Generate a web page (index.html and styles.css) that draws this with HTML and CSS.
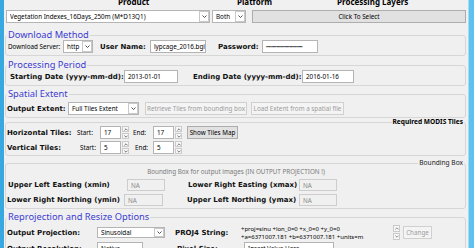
FILE: index.html
```html
<!DOCTYPE html>
<html>
<head>
<meta charset="utf-8">
<title>MODIS Download</title>
<link rel="stylesheet" href="styles.css">
</head>
<body>
<div class="window">
  <div class="edge-left"></div>
  <div class="form">
    <div class="colheads">
      <span class="h-product">Product</span>
      <span class="h-platform">Platform</span>
      <span class="h-layers">Processing Layers</span>
    </div>
    <div class="toprow">
      <div class="select w-product"><span class="val">Vegetation Indexes_16Days_250m (M*D13Q1)</span><span class="arrow"><svg width="5" height="3" viewBox="0 0 5 3"><path d="M0.5 0.5L2.5 2.5L4.5 0.5" fill="none" stroke="#404040" stroke-width="0.9"/></svg></span></div>
      <div class="select w-platform"><span class="val">Both</span><span class="arrow"><svg width="5" height="3" viewBox="0 0 5 3"><path d="M0.5 0.5L2.5 2.5L4.5 0.5" fill="none" stroke="#404040" stroke-width="0.9"/></svg></span></div>
      <div class="btn w-layers">Click To Select</div>
    </div>

    <fieldset class="group g-download">
      <legend class="title">Download Method</legend>
      <div class="row">
        <span class="lbl c-server">Download Server:</span>
        <div class="select w-http"><span class="val">http</span><span class="arrow"><svg width="5" height="3" viewBox="0 0 5 3"><path d="M0.5 0.5L2.5 2.5L4.5 0.5" fill="none" stroke="#404040" stroke-width="0.9"/></svg></span></div>
        <span class="blbl c-user">User Name:</span>
        <div class="input w-cred">lypcage_2016.bgi</div>
        <span class="blbl c-pass">Password:</span>
        <div class="input w-cred pw">••••••••••••••••••••••••••••</div>
      </div>
    </fieldset>

    <fieldset class="group g-period">
      <legend class="title">Processing Period</legend>
      <div class="row">
        <span class="blbl c-start">Starting Date (yyyy-mm-dd):</span>
        <div class="input w-date1">2013-01-01</div>
        <span class="blbl c-end">Ending Date (yyyy-mm-dd):</span>
        <div class="input w-date2">2016-01-16</div>
      </div>
    </fieldset>

    <fieldset class="group g-spatial">
      <legend class="title">Spatial Extent</legend>
      <div class="row">
        <span class="blbl c-extent">Output Extent:</span>
        <div class="select w-extent"><span class="val">Full Tiles Extent</span><span class="arrow"><svg width="5" height="3" viewBox="0 0 5 3"><path d="M0.5 0.5L2.5 2.5L4.5 0.5" fill="none" stroke="#404040" stroke-width="0.9"/></svg></span></div>
        <div class="btn disabled w-retrieve">Retrieve Tiles from bounding box</div>
        <div class="btn disabled w-load">Load Extent from a spatial file</div>
      </div>
    </fieldset>

    <fieldset class="group sub g-tiles">
      <legend class="subtitle strong">Required MODIS Tiles</legend>
      <div class="row">
        <span class="blbl c-htiles">Horizontal Tiles:</span>
        <span class="lbl c-hstart">Start:</span>
        <div class="input w-tile">17</div>
        <div class="spin"><b><svg width="4" height="3" viewBox="0 0 4 3"><path d="M0.4 2.4L2 0.8L3.6 2.4" fill="none" stroke="#555" stroke-width="0.8"/></svg></b><b><svg width="4" height="3" viewBox="0 0 4 3"><path d="M0.4 0.6L2 2.2L3.6 0.6" fill="none" stroke="#555" stroke-width="0.8"/></svg></b></div>
        <span class="lbl c-hend">End:</span>
        <div class="input w-tile">17</div>
        <div class="spin"><b><svg width="4" height="3" viewBox="0 0 4 3"><path d="M0.4 2.4L2 0.8L3.6 2.4" fill="none" stroke="#555" stroke-width="0.8"/></svg></b><b><svg width="4" height="3" viewBox="0 0 4 3"><path d="M0.4 0.6L2 2.2L3.6 0.6" fill="none" stroke="#555" stroke-width="0.8"/></svg></b></div>
        <div class="btn w-map">Show Tiles Map</div>
      </div>
      <div class="row r-vtiles">
        <span class="blbl c-vtiles">Vertical Tiles:</span>
        <span class="lbl c-vstart">Start:</span>
        <div class="input w-tile">5</div>
        <div class="spin"><b><svg width="4" height="3" viewBox="0 0 4 3"><path d="M0.4 2.4L2 0.8L3.6 2.4" fill="none" stroke="#555" stroke-width="0.8"/></svg></b><b><svg width="4" height="3" viewBox="0 0 4 3"><path d="M0.4 0.6L2 2.2L3.6 0.6" fill="none" stroke="#555" stroke-width="0.8"/></svg></b></div>
        <span class="lbl c-vend">End:</span>
        <div class="input w-tile">5</div>
        <div class="spin"><b><svg width="4" height="3" viewBox="0 0 4 3"><path d="M0.4 2.4L2 0.8L3.6 2.4" fill="none" stroke="#555" stroke-width="0.8"/></svg></b><b><svg width="4" height="3" viewBox="0 0 4 3"><path d="M0.4 0.6L2 2.2L3.6 0.6" fill="none" stroke="#555" stroke-width="0.8"/></svg></b></div>
      </div>
    </fieldset>

    <fieldset class="group sub g-bbox">
      <legend class="subtitle">Bounding Box</legend>
      <div class="caption">Bounding Box for output images (IN OUTPUT PROJECTION !)</div>
      <div class="row r-bb1">
        <span class="blbl c-ulx">Upper Left Easting (xmin)</span>
        <div class="input disabled w-na">NA</div>
        <span class="blbl c-lrx">Lower Right Easting (xmax)</span>
        <div class="input disabled w-na">NA</div>
      </div>
      <div class="row r-bb2">
        <span class="blbl c-lry">Lower Right Northing (ymin)</span>
        <div class="input disabled w-na2">NA</div>
        <span class="blbl c-uly">Upper Left Northing (ymax)</span>
        <div class="input disabled w-na">NA</div>
      </div>
    </fieldset>

    <fieldset class="group g-repro">
      <legend class="title">Reprojection and Resize Options</legend>
      <div class="row r-proj">
        <span class="blbl c-proj">Output Projection:</span>
        <div class="select w-proj"><span class="val">Sinusoidal</span><span class="arrow"><svg width="5" height="3" viewBox="0 0 5 3"><path d="M0.5 0.5L2.5 2.5L4.5 0.5" fill="none" stroke="#404040" stroke-width="0.9"/></svg></span></div>
        <span class="blbl c-proj4">PROJ4 String:</span>
        <div class="projtext">+proj=sinu +lon_0=0 +x_0=0 +y_0=0<br>+a=6371007.181 +b=6371007.181 +units=m</div>
        <div class="spin tall"><b><svg width="4" height="3" viewBox="0 0 4 3"><path d="M0.4 2.4L2 0.8L3.6 2.4" fill="none" stroke="#777" stroke-width="0.8"/></svg></b><b><svg width="4" height="3" viewBox="0 0 4 3"><path d="M0.4 0.6L2 2.2L3.6 0.6" fill="none" stroke="#777" stroke-width="0.8"/></svg></b></div>
        <div class="btn disabled w-change">Change</div>
      </div>
      <div class="row r-res">
        <span class="blbl c-res">Output Resolution:</span>
        <div class="input w-res">Native</div>
        <span class="blbl c-pix">Pixel Size:</span>
        <div class="input w-pix">Insert Value Here</div>
      </div>
    </fieldset>
  </div>
  <div class="edge-right"></div>
</div>
</body>
</html>
```

FILE: styles.css
```css
* { box-sizing: border-box; }

html, body { margin: 0; padding: 0; }

body {
  width: 474px;
  height: 248px;
  overflow: hidden;
  background: #f0f0f0;
  font-family: "Noto Sans", sans-serif;
  font-size: 6.3px;
  color: #000;
}

.window { display: flex; height: 248px; }

.edge-left { flex: none; width: 4px; background: #38a8e1; }

.edge-right {
  flex: none;
  width: 6px;
  background: #5dc2ee;
  border-left: 1px solid #a9dcf4;
}

.form {
  flex: 1;
  min-width: 0;
  display: flex;
  flex-direction: column;
}

/* column headers, partially scrolled out of view */
.colheads {
  flex: none;
  display: flex;
  height: 9px;
  font-weight: bold;
  font-size: 8px;
  line-height: 4px;
}
.h-product { margin-left: 114px; width: 119px; }
.h-platform { width: 100px; }

.toprow {
  flex: none;
  display: flex;
  margin: 1px 0 0 2px;
  height: 13px;
}

/* generic controls */
.select {
  flex: none;
  display: flex;
  align-items: center;
  height: 13px;
  background: #fff;
  border: 1px solid #b5b5b5;
  padding-left: 3px;
}
.select .val { flex: 1; min-width: 0; overflow: hidden; white-space: nowrap; }
.select .arrow {
  flex: none;
  width: 10px;
  height: 11px;
  border: 1px solid #c9c9c9;
  display: flex;
  align-items: center;
  justify-content: center;
}

.btn {
  flex: none;
  display: flex;
  align-items: center;
  justify-content: center;
  height: 13px;
  background: #e1e1e1;
  border: 1px solid #adadad;
  white-space: nowrap;
}
.btn.disabled { background: #f4f4f4; border-color: #d0d0d0; color: #9c9c9c; }

.input {
  flex: none;
  display: flex;
  align-items: center;
  height: 13px;
  background: #fff;
  border: 1px solid #b4b4b4;
  padding-left: 3px;
  white-space: nowrap;
  overflow: hidden;
}
.input.disabled { background: #f0f0f0; border-color: #cdcdcd; color: #8a8a8a; }
.input.pw { font-size: 4.4px; letter-spacing: -0.35px; padding-left: 3px; }

.spin {
  flex: none;
  display: flex;
  flex-direction: column;
  width: 7px;
  height: 13px;
  margin-left: 1px;
  gap: 1px;
}
.spin b {
  flex: 1;
  display: flex;
  align-items: center;
  justify-content: center;
  border: 1px solid #cbcbcb;
  background: #f7f7f7;
}
.spin.tall { height: 15px; }

.lbl { flex: none; white-space: nowrap; }
.blbl {
  flex: none;
  white-space: nowrap;
  font-family: "DejaVu Sans", sans-serif;
  font-weight: bold;
  font-size: 7px;
  color: #111;
}

/* group boxes */
.group {
  flex: none;
  min-width: 0;
  margin: 0 2px 0 1px;
  padding: 0 0 2px 1px;
  border: 1px solid #d6d6d6;
  border-radius: 3px;
}
.title {
  padding: 0 1px;
  font-size: 9.3px;
  line-height: 10px;
  color: #3b3bd2;
}
.subtitle {
  margin-left: auto;
  margin-right: 1px;
  padding: 0 1px;
  font-size: 6.6px;
  line-height: 8px;
  color: #222;
}
.subtitle.strong { font-weight: bold; color: #000; }

.row { display: flex; align-items: center; height: 13px; }

.g-download { margin-top: 7px; }
.g-period { margin-top: 4px; }
.g-spatial { margin-top: 3px; }
.g-spatial .row { margin-top: 3px; }
.g-tiles { margin-top: 0; padding-bottom: 1px; }
.r-vtiles { margin-top: 2px; }
.g-bbox { margin-top: 3px; }
.g-repro { margin-top: 3px; }

/* top row widths */
.w-product { width: 204px; }
.w-platform { width: 34px; margin-left: 2px; }
.w-layers { width: 214px; margin-left: 6px; }

/* download row */
.c-server { width: 55px; margin-left: 1px; }
.w-http { width: 30px; }
.c-user { width: 50px; margin-left: 7px; }
.w-cred { width: 56px; }
.c-pass { width: 44px; margin-left: 12px; }

/* period row */
.c-start { width: 114px; margin-left: 3px; }
.w-date1 { width: 54px; }
.c-end { width: 109px; margin-left: 15px; }
.w-date2 { width: 52px; }

/* spatial row */
.c-extent { width: 61px; }
.w-extent { width: 71px; }
.w-retrieve { width: 102px; margin-left: 6px; }
.w-load { width: 93px; margin-left: 4px; }

/* tiles rows */
.c-htiles { width: 70px; }
.c-hstart { width: 23px; }
.w-tile { width: 21px; }
.c-hend { width: 20px; margin-left: 4px; }
.w-map { width: 51px; margin-left: 5px; }
.c-vtiles { width: 73px; }
.c-vstart { width: 20px; }
.c-vend { width: 18px; margin-left: 6px; }

/* bounding box */
.caption {
  height: 10px;
  line-height: 10px;
  text-align: center;
  color: #7a7a7a;
}
.r-bb1 { margin-top: 2px; height: 12px; }
.r-bb2 { margin-top: 3px; height: 12px; }
.w-na, .w-na2 { height: 12px; width: 38px; }
.w-na2 { width: 39px; }
.c-ulx { width: 119px; margin-left: 1px; }
.c-lrx { width: 111px; margin-left: 23px; }
.c-lry { width: 117px; }
.c-uly { width: 112px; margin-left: 24px; }

/* reprojection */
.r-proj { margin-top: 2px; height: 17px; }
.c-proj { width: 90px; }
.w-proj { width: 68px; height: 11px; }
.w-proj .arrow { height: 9px; }
.c-proj4 { width: 66px; margin-left: 10px; }
.projtext {
  flex: none;
  width: 151px;
  font-size: 6px;
  line-height: 8px;
  white-space: nowrap;
  overflow: hidden;
}
.w-change { width: 29px; margin-left: 3px; }
.r-res { margin-top: 1px; }
.c-res { width: 90px; }
.w-res { width: 46px; }
.c-pix { width: 67px; margin-left: 34px; }
.w-pix { width: 90px; }
```
